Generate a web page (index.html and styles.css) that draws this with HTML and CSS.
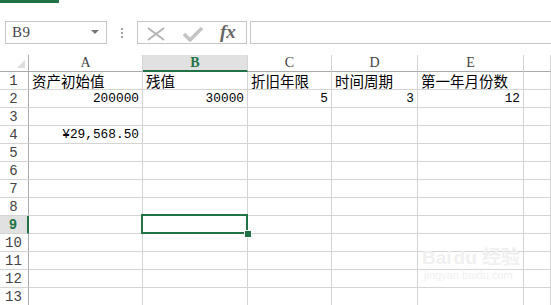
FILE: index.html
```html
<!DOCTYPE html>
<html>
<head>
<meta charset="utf-8">
<title>Sheet</title>
<link rel="stylesheet" href="styles.css">
</head>
<body>

<div class="ribbon-edge"></div>

<div class="formula-row">
	<div class="name-box">
		<span class="name-text">B9</span>
		<span class="name-arrow"></span>
	</div>
	<div class="grip"><i></i><i></i><i></i></div>
	<div class="fx-buttons">
		<svg class="btn-cancel" width="18" height="14" viewBox="0 0 18 14">
			<path d="M1 1 L17 13 M17 1 L1 13" stroke="#b4b4b4" stroke-width="2" fill="none"/>
		</svg>
		<svg class="btn-enter" width="20" height="15" viewBox="0 0 20 15">
			<path d="M1 7 L7 13 L19 1" stroke="#c4c4c4" stroke-width="3.5" fill="none"/>
		</svg>
		<span class="btn-fx">fx</span>
	</div>
	<div class="formula-input"></div>
</div>

<div class="sheet">
	<div class="corner"><span class="corner-tri"></span></div>
	<div class="col-head">A</div>
	<div class="col-head active">B</div>
	<div class="col-head">C</div>
	<div class="col-head">D</div>
	<div class="col-head">E</div>
	<div class="col-head"></div>

	<div class="row-head">1</div>
	<div class="cell cjk">资产初始值</div>
	<div class="cell cjk">残值</div>
	<div class="cell cjk">折旧年限</div>
	<div class="cell cjk">时间周期</div>
	<div class="cell cjk">第一年月份数</div>
	<div class="cell"></div>

	<div class="row-head">2</div>
	<div class="cell num">200000</div>
	<div class="cell num">30000</div>
	<div class="cell num">5</div>
	<div class="cell num">3</div>
	<div class="cell num">12</div>
	<div class="cell"></div>

	<div class="row-head">3</div>
	<div class="cell"></div><div class="cell"></div><div class="cell"></div><div class="cell"></div><div class="cell"></div><div class="cell"></div>

	<div class="row-head">4</div>
	<div class="cell num">¥29,568.50</div>
	<div class="cell"></div><div class="cell"></div><div class="cell"></div><div class="cell"></div><div class="cell"></div>

	<div class="row-head">5</div>
	<div class="cell"></div><div class="cell"></div><div class="cell"></div><div class="cell"></div><div class="cell"></div><div class="cell"></div>
	<div class="row-head">6</div>
	<div class="cell"></div><div class="cell"></div><div class="cell"></div><div class="cell"></div><div class="cell"></div><div class="cell"></div>
	<div class="row-head">7</div>
	<div class="cell"></div><div class="cell"></div><div class="cell"></div><div class="cell"></div><div class="cell"></div><div class="cell"></div>
	<div class="row-head">8</div>
	<div class="cell"></div><div class="cell"></div><div class="cell"></div><div class="cell"></div><div class="cell"></div><div class="cell"></div>

	<div class="row-head active">9</div>
	<div class="cell"></div>
	<div class="cell selected"><span class="fill-handle"></span></div>
	<div class="cell"></div><div class="cell"></div><div class="cell"></div><div class="cell"></div>

	<div class="row-head">10</div>
	<div class="cell"></div><div class="cell"></div><div class="cell"></div><div class="cell"></div><div class="cell"></div><div class="cell"></div>
	<div class="row-head">11</div>
	<div class="cell"></div><div class="cell"></div><div class="cell"></div><div class="cell"></div><div class="cell"></div><div class="cell"></div>
	<div class="row-head">12</div>
	<div class="cell"></div><div class="cell"></div><div class="cell"></div><div class="cell"></div><div class="cell"></div><div class="cell"></div>
	<div class="row-head">13</div>
	<div class="cell"></div><div class="cell"></div><div class="cell"></div><div class="cell"></div><div class="cell"></div><div class="cell"></div>

	<div class="watermark">
		<div class="wm-logo">Bai<span class="wm-du">du</span> 经验</div>
		<div class="wm-url">jingyan.baidu.com</div>
	</div>
</div>

</body>
</html>
```

FILE: styles.css
```css
* {
	margin: 0;
	padding: 0;
	box-sizing: border-box;
}
body {
	width: 551px;
	height: 305px;
	overflow: hidden;
	background: #fff;
	font-family: "Liberation Mono", "Noto Sans CJK SC", monospace;
	color: #000;
}

/* top strip */
.ribbon-edge {
	width: 59px;
	height: 3px;
	background: #217346;
}

/* name box + formula bar */
.formula-row {
	display: flex;
	align-items: stretch;
	height: 23px;
	margin-top: 18px;
	padding-left: 5px;
}
.name-box {
	width: 102px;
	border: 1px solid #c6c6c6;
	display: flex;
	align-items: center;
	justify-content: space-between;
	padding: 0 7px 0 6px;
}
.name-text {
	font-family: "Liberation Serif", serif;
	font-size: 15px;
	color: #444;
	letter-spacing: 0.5px;
}
.name-arrow {
	width: 0;
	height: 0;
	border-left: 4px solid transparent;
	border-right: 4px solid transparent;
	border-top: 4px solid #777;
	margin-top: -2px;
}
.grip {
	width: 30px;
	display: flex;
	flex-direction: column;
	align-items: center;
	justify-content: center;
	gap: 2px;
}
.grip i {
	display: block;
	width: 2px;
	height: 2px;
	background: #a0a0a0;
}
.fx-buttons {
	width: 110px;
	border: 1px solid #c6c6c6;
	display: flex;
	align-items: center;
	padding-left: 9px;
}
.btn-cancel {
	margin-top: 2px;
}
.btn-enter {
	margin-left: 18px;
	margin-top: 3px;
}
.btn-fx {
	margin-left: 17px;
	font-family: "Liberation Serif", serif;
	font-style: italic;
	font-weight: bold;
	font-size: 19px;
	color: #666;
	margin-top: -2px;
}
.formula-input {
	flex: 1;
	margin-left: 3px;
	border: 1px solid #c6c6c6;
	border-right: none;
}

/* grid */
.sheet {
	position: relative;
	margin-top: 11px;
	display: grid;
	grid-template-columns: 29px 114px 105px 84px 86px 106px 1fr;
	grid-template-rows: 17px repeat(13, 18px);
}
.corner {
	position: relative;
	border-right: 1px solid #ababab;
	border-bottom: 1px solid #ababab;
}
.corner-tri {
	position: absolute;
	right: 3px;
	bottom: 3px;
	width: 0;
	height: 0;
	border-left: 8px solid transparent;
	border-bottom: 8px solid #dcdcdc;
}
.col-head {
	border-right: 1px solid #d4d4d4;
	border-bottom: 1px solid #ababab;
	text-align: center;
	font-family: "Liberation Serif", serif;
	font-size: 14px;
	line-height: 16px;
	color: #444;
}
.col-head.active {
	background: #e1e1e1;
	border-bottom: 2px solid #217346;
	color: #217346;
	font-weight: bold;
}
.row-head {
	border-right: 1px solid #ababab;
	border-bottom: 1px solid #d4d4d4;
	text-align: center;
	font-size: 14px;
	line-height: 18px;
	color: #444;
	padding-right: 1px;
}
.row-head.active {
	background: #e1e1e1;
	border-right: 2px solid #217346;
	color: #217346;
	font-weight: bold;
}
.cell {
	position: relative;
	border-right: 1px solid #d4d4d4;
	border-bottom: 1px solid #d4d4d4;
	font-size: 12.8px;
	line-height: 18px;
	white-space: nowrap;
	overflow: hidden;
}
.cell.cjk {
	font-family: "Noto Sans CJK SC", sans-serif;
	font-size: 14.5px;
	line-height: 17px;
	padding-left: 3px;
	overflow: visible;
}
.cell.num {
	text-align: right;
	padding-right: 3px;
	overflow: visible;
}
.cell.selected {
	overflow: visible;
}
.cell.selected::before {
	content: "";
	position: absolute;
	left: -2px;
	top: -2px;
	right: -1px;
	bottom: -1px;
	border: 2px solid #217346;
}
.fill-handle {
	position: absolute;
	right: -5px;
	bottom: -5px;
	width: 8px;
	height: 8px;
	background: #217346;
	border: 1px solid #fff;
	z-index: 1;
}

/* faint watermark */
.watermark {
	position: absolute;
	left: 422px;
	top: 193px;
	color: #f0f0f0;
	font-family: "Liberation Sans", "Noto Sans CJK SC", sans-serif;
	pointer-events: none;
}
.wm-logo {
	font-size: 19px;
	font-weight: bold;
	line-height: 20px;
}
.wm-du {
	margin-left: 2px;
}
.wm-url {
	font-size: 11px;
	line-height: 14px;
	margin-left: 2px;
}
```
